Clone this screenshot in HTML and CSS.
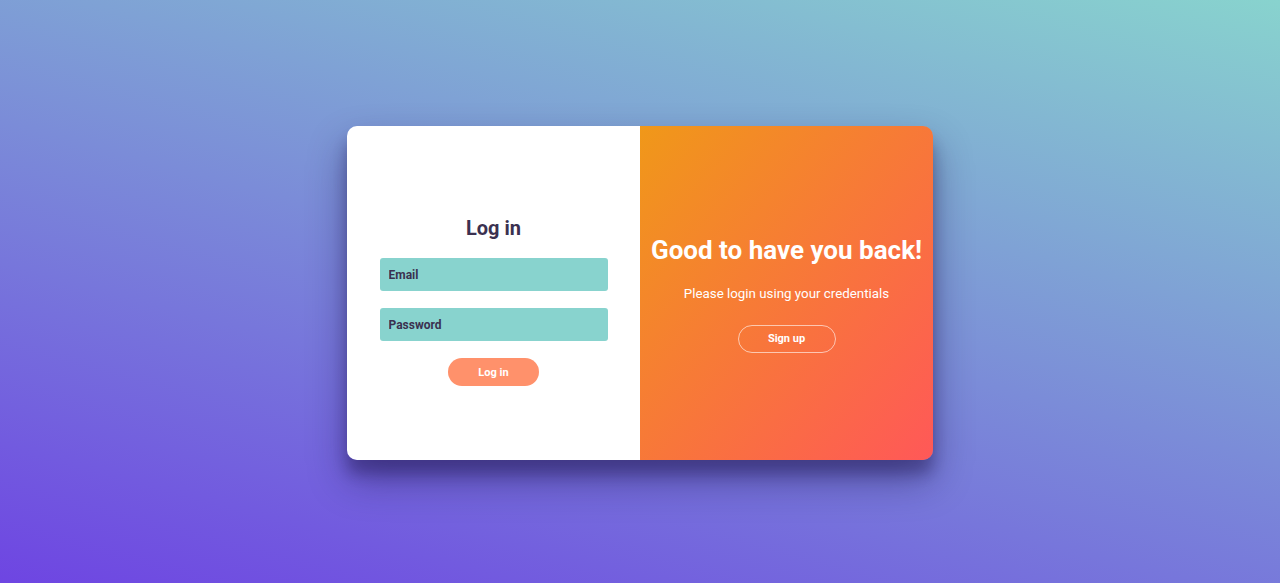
FILE: index.html
```html
<!DOCTYPE html>
<html lang="en">
<head>
<meta charset="utf-8">
<title>Log in</title>
<link rel="stylesheet" href="styles.css">
</head>
<body>
<main class="page">
  <div class="card">
    <section class="panel panel-form">
      <h1 class="form-title">Log in</h1>
      <input class="field" type="email" placeholder="Email">
      <input class="field" type="password" placeholder="Password">
      <button class="btn btn-primary" type="button">Log in</button>
    </section>
    <section class="panel panel-overlay">
      <h2 class="overlay-title">Good to have you back!</h2>
      <p class="overlay-text">Please login using your credentials</p>
      <button class="btn btn-ghost" type="button">Sign up</button>
    </section>
  </div>
</main>
</body>
</html>
```

FILE: styles.css
```css
* { box-sizing: border-box; }
html, body { margin: 0; height: 100%; }
body {
  font-family: Roboto, "Noto Sans", "Liberation Sans", sans-serif;
  background: linear-gradient(15deg, #6e45e2 0%, #88d3ce 100%);
  overflow: hidden;
}
.page {
  min-height: 100vh;
  display: flex;
  align-items: center;
  justify-content: center;
  padding-top: 3px;
}
.card {
  width: 586px;
  height: 334px;
  display: flex;
  border-radius: 10px;
  overflow: hidden;
  box-shadow: 0 20px 38px rgba(25,15,70,0.42), 0 14px 14px rgba(25,15,70,0.3);
}
.panel {
  flex: 0 0 50%;
  min-width: 0;
  display: flex;
  flex-direction: column;
  align-items: center;
  justify-content: center;
}
.panel-form {
  background: #fff;
  padding: 16px 32px 0 32px;
}
.form-title {
  margin: 0 0 18px;
  font-size: 20px;
  line-height: 24px;
  font-weight: 700;
  color: #3b3150;
}
.field {
  width: 228px;
  height: 33px;
  margin: 0 0 17px;
  border: none;
  border-radius: 3px;
  background: #88d3ce;
  padding: 0 9px;
  font-family: inherit;
  font-size: 12px;
  font-weight: 700;
  color: #3b3150;
  outline: none;
}
.field::placeholder { color: #3b3150; opacity: 1; }
.btn {
  font-family: inherit;
  font-size: 11px;
  font-weight: 700;
  color: #fff;
  border-radius: 20px;
  cursor: pointer;
  height: 28px;
}
.btn-primary {
  width: 91px;
  border: none;
  background: #ff916b;
}
.panel-overlay {
  background: linear-gradient(to bottom right, #f09819 0%, #ff5858 100%);
  color: #fff;
}
.overlay-title {
  margin: 0 0 19px;
  font-size: 26px;
  line-height: 32px;
  font-weight: 700;
  white-space: nowrap;
}
.overlay-text {
  margin: 0 0 22px;
  font-size: 13.33px;
  line-height: 18px;
}
.btn-ghost {
  width: 98px;
  background: transparent;
  border: 1px solid rgba(255,255,255,0.6);
}
```
